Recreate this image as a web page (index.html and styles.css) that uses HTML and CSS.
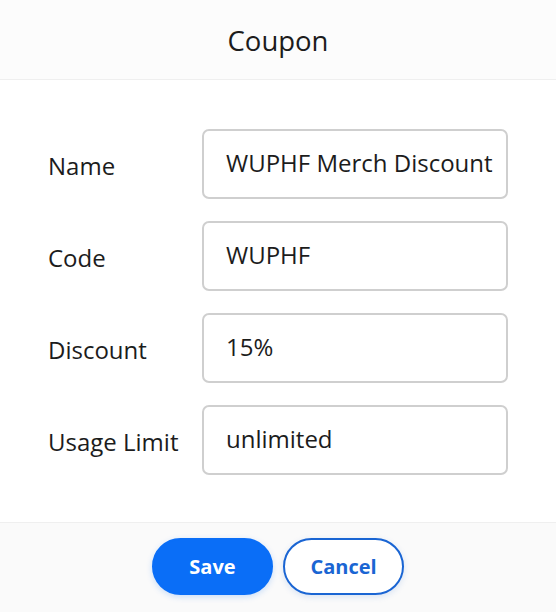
FILE: index.html
```html
<!DOCTYPE html>
<html>
<head>
<meta charset="utf-8">
<link rel="stylesheet" href="styles.css">
</head>
<body>
<div class="dialog">
  <header class="head"><h1 class="title">Coupon</h1></header>
  <main class="form">
    <div class="row"><label class="label">Name</label><div class="field">WUPHF Merch Discount</div></div>
    <div class="row"><label class="label">Code</label><div class="field">WUPHF</div></div>
    <div class="row"><label class="label">Discount</label><div class="field">15%</div></div>
    <div class="row"><label class="label">Usage Limit</label><div class="field">unlimited</div></div>
  </main>
  <footer class="foot">
    <button class="btn btn-primary">Save</button>
    <button class="btn btn-outline">Cancel</button>
  </footer>
</div>
</body>
</html>
```
FILE: styles.css
```css
* { box-sizing: border-box; }
html, body { margin: 0; padding: 0; }
body {
  width: 556px;
  height: 612px;
  background: #ffffff;
  font-family: "Open Sans", "Noto Sans", sans-serif;
  color: #1c1c1c;
}
.dialog { display: flex; flex-direction: column; height: 612px; }
.head {
  height: 80px;
  background: #fcfcfc;
  border-bottom: 1px solid #efefef;
  display: flex;
  align-items: center;
  justify-content: center;
}
.title {
  margin: 0;
  font-size: 27.5px;
  font-weight: 400;
  padding-top: 1px;
}
.form {
  padding: 49px 48px 47px 48px;
  display: flex;
  flex-direction: column;
  gap: 22px;
  border-bottom: 1px solid #efefef;
}
.row { display: flex; align-items: center; }
.label {
  width: 154px;
  font-size: 24px;
  flex-shrink: 0;
  padding-top: 2px;
}
.field {
  width: 306px;
  height: 70px;
  border: 2px solid #cfcfcf;
  border-radius: 7px;
  padding: 0 2px 4px 22px;
  display: flex;
  align-items: center;
  font-size: 24px;
  white-space: nowrap;
  overflow: hidden;
  background: #fff;
}
.foot {
  flex: 1;
  background: #fafafa;
  display: flex;
  justify-content: center;
  align-items: center;
  gap: 10px;
  padding-bottom: 2px;
}
.btn {
  width: 121px;
  height: 57px;
  border-radius: 29px;
  font-family: inherit;
  font-size: 20px;
  font-weight: 700;
  cursor: pointer;
}
.btn-primary {
  background: #0a6ef7;
  color: #ffffff;
  border: 2px solid #0a6ef7;
  box-shadow: 0 2px 6px rgba(10, 110, 247, 0.2);
}
.btn-outline {
  background: #ffffff;
  color: #1a65d3;
  border: 2px solid #1a65d3;
  box-shadow: 0 2px 6px rgba(26, 101, 211, 0.15);
}
```
